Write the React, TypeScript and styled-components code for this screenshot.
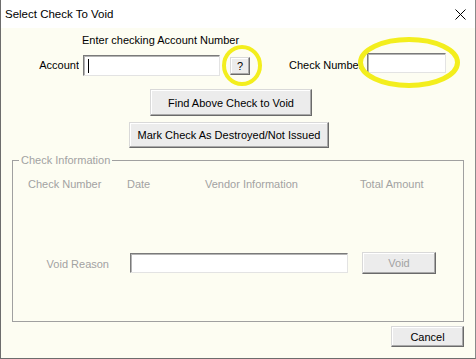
import React from 'react';
import styled, { createGlobalStyle } from 'styled-components';

const GlobalStyle = createGlobalStyle`
  html, body {
    margin: 0;
    padding: 0;
    background: #fdfdf2;
  }
  body {
    font-family: "Liberation Sans", Arial, sans-serif;
    font-size: 11px;
    color: #000;
  }
`;

const Window = styled.div`
  position: relative;
  width: 476px;
  height: 359px;
  box-sizing: border-box;
  border-left: 1px solid #6d6d6d;
  border-right: 1px solid #8a8a8a;
  border-bottom: 1px solid #6d6d6d;
  background: #fdfdf2;
  display: flex;
  flex-direction: column;
  overflow: hidden;
`;

const TitleBar = styled.div`
  height: 28px;
  flex-shrink: 0;
  background: #fff;
  display: flex;
  align-items: center;
  justify-content: space-between;
  padding: 0 9px 0 4px;
`;

const Title = styled.span`
  font-size: 11.5px;
`;

const CloseIcon = styled.svg`
  width: 11px;
  height: 11px;
`;

const Body = styled.div`
  display: flex;
  flex-direction: column;
  flex: 1;
`;

const Hint = styled.div`
  margin-top: 5px;
  padding-left: 81px;
  line-height: 14px;
`;

const Row = styled.div<{ $top: number }>`
  display: flex;
  align-items: flex-start;
  margin-top: ${(p) => p.$top}px;
`;

const Label = styled.div<{ $width: number; $disabled?: boolean }>`
  width: ${(p) => p.$width}px;
  flex-shrink: 0;
  text-align: right;
  line-height: 21px;
  margin-top: 2px;
  white-space: nowrap;
  overflow: hidden;
  color: ${(p) => (p.$disabled ? '#a2a2a2' : '#000')};
`;

const ClipLabel = styled(Label)`
  text-align: left;
  margin-left: 39px;
`;

const Field = styled.div<{ $width: number; $height: number; $left?: number; $top?: number }>`
  width: ${(p) => p.$width}px;
  height: ${(p) => p.$height}px;
  margin-left: ${(p) => p.$left ?? 0}px;
  margin-top: ${(p) => p.$top ?? 0}px;
  box-sizing: border-box;
  flex-shrink: 0;
  background: #fff;
  border: 1px solid;
  border-color: #7a7a7a #e3e3e3 #e3e3e3 #7a7a7a;
  box-shadow: inset 1px 1px #b4b4b4;
  display: flex;
  align-items: center;
`;

const Caret = styled.span`
  width: 1px;
  height: 14px;
  margin-left: 4px;
  background: #000;
`;

const Button = styled.button<{ $width: number; $height: number; $left?: number; $top?: number }>`
  width: ${(p) => p.$width}px;
  height: ${(p) => p.$height}px;
  margin: ${(p) => p.$top ?? 0}px 0 0 ${(p) => p.$left ?? 0}px;
  padding: 0;
  flex-shrink: 0;
  box-sizing: border-box;
  align-self: flex-start;
  font-family: inherit;
  font-size: 11px;
  color: #000;
  background: #ececec;
  border: 1px solid;
  border-color: #d9d9d9 #6a6a6a #6a6a6a #d9d9d9;
  box-shadow: inset -1px -1px #a9a9a9, inset 1px 1px #ffffff;
  border-radius: 0;

  &:disabled {
    color: #a2a2a2;
  }
`;

const CancelButton = styled(Button)`
  align-self: flex-end;
  margin-right: 11px;
`;

const Group = styled.fieldset`
  margin: 5px 0 0 11px;
  padding: 0;
  width: 452px;
  height: 169px;
  box-sizing: border-box;
  border: 1px solid #a0a0a0;
  display: flex;
  flex-direction: column;
`;

const Legend = styled.legend`
  margin-left: 6px;
  padding: 0 2px;
  line-height: 14px;
  color: #a2a2a2;
`;

const Columns = styled.div`
  display: grid;
  grid-template-columns: 99px 78px 155px auto;
  padding-left: 15px;
  margin-top: 10px;
  line-height: 14px;
  color: #a2a2a2;
`;

const Annotations = styled.svg`
  position: absolute;
  left: 0;
  top: 0;
  width: 476px;
  height: 359px;
  pointer-events: none;
`;

export default function App() {
  return (
    <>
      <GlobalStyle />
      <Window>
        <TitleBar>
          <Title>Select Check To Void</Title>
          <CloseIcon viewBox="0 0 11 11">
            <path d="M0.5 0.5 L10.5 10.5 M10.5 0.5 L0.5 10.5" stroke="#000" strokeWidth="1" fill="none" />
          </CloseIcon>
        </TitleBar>
        <Body>
          <Hint>Enter checking Account Number</Hint>
          <Row $top={6}>
            <Label $width={78}>Account</Label>
            <Field $width={137} $height={21} $left={4} $top={2}>
              <Caret />
            </Field>
            <Button $width={20} $height={18} $left={10} $top={4}>?</Button>
            <ClipLabel $width={78}>Check Number</ClipLabel>
            <Field $width={79} $height={20} />
          </Row>
          <Button $width={162} $height={27} $left={149} $top={13}>Find Above Check to Void</Button>
          <Button $width={200} $height={26} $left={128} $top={6}>Mark Check As Destroyed/Not Issued</Button>
          <Group disabled>
            <Legend>Check Information</Legend>
            <Columns>
              <span>Check Number</span>
              <span>Date</span>
              <span>Vendor Information</span>
              <span>Total Amount</span>
            </Columns>
            <Row $top={61}>
              <Label $width={96} $disabled>Void Reason</Label>
              <Field $width={218} $height={20} $left={21} $top={1} />
              <Button $width={74} $height={22} $left={14} disabled>Void</Button>
            </Row>
          </Group>
          <CancelButton $width={73} $height={21} $top={4}>Cancel</CancelButton>
        </Body>
        <Annotations viewBox="0 0 476 359">
          <ellipse cx="241" cy="65.5" rx="18" ry="18.5" fill="none" stroke="#f3ee1d" strokeWidth="4" />
          <ellipse cx="408" cy="62.5" rx="48.5" ry="23" fill="none" stroke="#f3ee1d" strokeWidth="5" />
        </Annotations>
      </Window>
    </>
  );
}
